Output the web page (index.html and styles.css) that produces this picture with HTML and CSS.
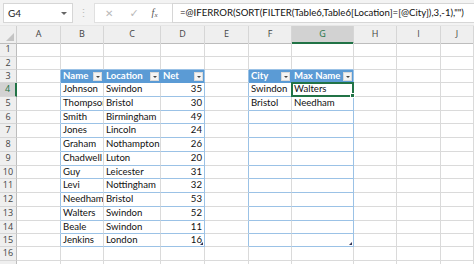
FILE: index.html
```html
<!DOCTYPE html>
<html>
<head>
<meta charset="utf-8">
<link rel="stylesheet" href="styles.css">
</head>
<body>
<div class="bar">
  <div class="namebox"><span>G4</span><span class="caret"></span></div>
  <div class="sep">⋮</div>
  <div class="btns"><span class="x">✕</span><span class="ok">✓</span><span class="fx">f<sub>x</sub></span></div>
  <div class="formula">=@IFERROR(SORT(FILTER(Table6,Table6[Location]=[@City]),3,-1),"")</div>
</div>
<div class="sheet">
  <div class="row hdr">
    <div class="corner"><span class="tri"></span></div>
    <div class="ch">A</div><div class="ch">B</div><div class="ch">C</div><div class="ch">D</div><div class="ch">E</div><div class="ch">F</div><div class="ch csel">G</div><div class="ch">H</div><div class="ch">I</div><div class="ch">J</div>
  </div>
  <div class="row h14">
    <div class="rh">1</div><div class="c"></div><div class="c"></div><div class="c"></div><div class="c"></div><div class="c"></div><div class="c"></div><div class="c"></div><div class="c"></div><div class="c"></div><div class="c"></div>
  </div>
  <div class="row h13">
    <div class="rh">2</div><div class="c"></div><div class="c tb"></div><div class="c tb"></div><div class="c tb"></div><div class="c"></div><div class="c tb"></div><div class="c tb"></div><div class="c"></div><div class="c"></div><div class="c"></div>
  </div>
  <div class="row h13">
    <div class="rh">3</div><div class="c tl"></div>
    <div class="c th"><span>Name</span><i class="dd"></i></div>
    <div class="c th"><span>Location</span><i class="dd"></i></div>
    <div class="c th tr"><span>Net</span><i class="dd"></i></div>
    <div class="c tl"></div>
    <div class="c th"><span>City</span><i class="dd"></i></div>
    <div class="c th tr"><span>Max Name</span><i class="dd"></i></div>
    <div class="c"></div><div class="c"></div><div class="c"></div>
  </div>
  <div class="row h14">
    <div class="rh rsel">4</div><div class="c tl"></div>
    <div class="c tb">Johnson</div><div class="c tb">Swindon</div><div class="c tb tr num">35</div>
    <div class="c tl"></div>
    <div class="c tb">Swindon</div><div class="c tb tr sc">Walters<i class="sel"><i class="fill"></i></i></div>
    <div class="c"></div><div class="c"></div><div class="c"></div>
  </div>
  <div class="row h14">
    <div class="rh">5</div><div class="c tl"></div>
    <div class="c tb">Thompson</div><div class="c tb">Bristol</div><div class="c tb tr num">30</div>
    <div class="c tl"></div>
    <div class="c tb">Bristol</div><div class="c tb tr">Needham</div>
    <div class="c"></div><div class="c"></div><div class="c"></div>
  </div>
  <div class="row h13">
    <div class="rh">6</div><div class="c tl"></div>
    <div class="c tb">Smith</div><div class="c tb">Birmingham</div><div class="c tb tr num">49</div>
    <div class="c tl"></div>
    <div class="c tb"></div><div class="c tb tr"></div>
    <div class="c"></div><div class="c"></div><div class="c"></div>
  </div>
  <div class="row h14">
    <div class="rh">7</div><div class="c tl"></div>
    <div class="c tb">Jones</div><div class="c tb">Lincoln</div><div class="c tb tr num">24</div>
    <div class="c tl"></div>
    <div class="c tb"></div><div class="c tb tr"></div>
    <div class="c"></div><div class="c"></div><div class="c"></div>
  </div>
  <div class="row h14">
    <div class="rh">8</div><div class="c tl"></div>
    <div class="c tb">Graham</div><div class="c tb">Nothampton</div><div class="c tb tr num">26</div>
    <div class="c tl"></div>
    <div class="c tb"></div><div class="c tb tr"></div>
    <div class="c"></div><div class="c"></div><div class="c"></div>
  </div>
  <div class="row h14">
    <div class="rh">9</div><div class="c tl"></div>
    <div class="c tb">Chadwell</div><div class="c tb">Luton</div><div class="c tb tr num">20</div>
    <div class="c tl"></div>
    <div class="c tb"></div><div class="c tb tr"></div>
    <div class="c"></div><div class="c"></div><div class="c"></div>
  </div>
  <div class="row h13">
    <div class="rh">10</div><div class="c tl"></div>
    <div class="c tb">Guy</div><div class="c tb">Leicester</div><div class="c tb tr num">31</div>
    <div class="c tl"></div>
    <div class="c tb"></div><div class="c tb tr"></div>
    <div class="c"></div><div class="c"></div><div class="c"></div>
  </div>
  <div class="row h14">
    <div class="rh">11</div><div class="c tl"></div>
    <div class="c tb">Levi</div><div class="c tb">Nottingham</div><div class="c tb tr num">32</div>
    <div class="c tl"></div>
    <div class="c tb"></div><div class="c tb tr"></div>
    <div class="c"></div><div class="c"></div><div class="c"></div>
  </div>
  <div class="row h14">
    <div class="rh">12</div><div class="c tl"></div>
    <div class="c tb">Needham</div><div class="c tb">Bristol</div><div class="c tb tr num">53</div>
    <div class="c tl"></div>
    <div class="c tb"></div><div class="c tb tr"></div>
    <div class="c"></div><div class="c"></div><div class="c"></div>
  </div>
  <div class="row h14">
    <div class="rh">13</div><div class="c tl"></div>
    <div class="c tb">Walters</div><div class="c tb">Swindon</div><div class="c tb tr num">52</div>
    <div class="c tl"></div>
    <div class="c tb"></div><div class="c tb tr"></div>
    <div class="c"></div><div class="c"></div><div class="c"></div>
  </div>
  <div class="row h13">
    <div class="rh">14</div><div class="c tl"></div>
    <div class="c tb">Beale</div><div class="c tb">Swindon</div><div class="c tb tr num">11</div>
    <div class="c tl"></div>
    <div class="c tb"></div><div class="c tb tr"></div>
    <div class="c"></div><div class="c"></div><div class="c"></div>
  </div>
  <div class="row h13">
    <div class="rh">15</div><div class="c tl"></div>
    <div class="c tb">Jenkins</div><div class="c tb">London</div><div class="c tb tr num end">16</div>
    <div class="c tl"></div>
    <div class="c tb"></div><div class="c tb tr end"></div>
    <div class="c"></div><div class="c"></div><div class="c"></div>
  </div>
  <div class="row h14">
    <div class="rh">16</div><div class="c"></div><div class="c"></div><div class="c"></div><div class="c"></div><div class="c"></div><div class="c"></div><div class="c"></div><div class="c"></div><div class="c"></div><div class="c"></div>
  </div>
  <div class="row h14">
    <div class="rh"></div><div class="c"></div><div class="c"></div><div class="c"></div><div class="c"></div><div class="c"></div><div class="c"></div><div class="c"></div><div class="c"></div><div class="c"></div><div class="c"></div>
  </div>
</div>
</body>
</html>
```

FILE: styles.css
```css
* { box-sizing: border-box; margin: 0; padding: 0; }
body {
  margin: 0;
  width: 474px;
  height: 264px;
  overflow: hidden;
  background: #fff;
  font-family: Lato, "Liberation Sans", sans-serif;
  color: #000;
}
.bar {
  height: 26px;
  background: #f3f3f3;
  display: flex;
  align-items: flex-start;
  padding-top: 3px;
  padding-left: 3px;
  border-bottom: 1px solid #e6e6e6;
}
.namebox {
  width: 70px;
  height: 20px;
  background: #fff;
  border: 1px solid #d6d6d6;
  display: flex;
  align-items: center;
  justify-content: space-between;
  padding: 0 5px 0 4px;
  font-size: 10px;
  color: #222;
}
.caret {
  width: 0; height: 0;
  border-left: 3px solid transparent;
  border-right: 3px solid transparent;
  border-top: 3px solid #666;
}
.sep {
  width: 21px;
  text-align: center;
  color: #bdbdbd;
  font-size: 11px;
  line-height: 20px;
}
.btns {
  width: 78px;
  height: 20px;
  background: #fff;
  border: 1px solid #e0e0e0;
  border-right: none;
  display: flex;
  align-items: center;
  font-family: "DejaVu Sans", sans-serif;
}
.btns .x { margin-left: 10px; color: #b9b9b9; font-size: 10px; }
.btns .ok { margin-left: 16px; color: #b9b9b9; font-size: 11px; }
.btns .fx { margin-left: 13px; color: #555; font-size: 10px; font-style: italic; font-family: "Liberation Serif", serif; }
.btns .fx sub { font-size: 7px; vertical-align: -1px; }
.formula {
  flex: 1;
  height: 20px;
  background: #fff;
  border: 1px solid #d6d6d6;
  border-right: none;
  padding-left: 7px;
  font-size: 9.6px;
  line-height: 18px;
  color: #111;
  white-space: nowrap;
  overflow: hidden;
}
.sheet { display: flex; flex-direction: column; }
.row {
  display: grid;
  grid-template-columns: 17px 44px 43px 57px 44px 44px 43px 62px 43px 44px 33px;
}
.hdr { height: 17px; background: #efefef; }
.h13 { height: 13px; }
.h14 { height: 14px; }
.corner {
  position: relative;
  border-right: 1px solid #d0d0d0;
  border-bottom: 1px solid #bdbdbd;
}
.tri {
  position: absolute;
  right: 2px; bottom: 2px;
  width: 0; height: 0;
  border-left: 8px solid transparent;
  border-bottom: 8px solid #c4c4c4;
}
.ch {
  border-right: 1px solid #d6d6d6;
  border-bottom: 1px solid #bdbdbd;
  text-align: center;
  font-family: "Open Sans", sans-serif;
  font-size: 9px;
  line-height: 16px;
  color: #444;
}
.csel {
  background: #d2d2d2;
  border-bottom: 2px solid #217346;
  color: #217346;
}
.rh {
  background: #efefef;
  border-right: 1px solid #bdbdbd;
  border-bottom: 1px solid #d6d6d6;
  font-family: "Open Sans", sans-serif;
  font-size: 9px;
  color: #444;
  text-align: center;
  line-height: 12px;
}
.rsel {
  background: #d2d2d2;
  border-right: 2px solid #217346;
  color: #217346;
}
.c {
  position: relative;
  border-right: 1px solid #dadada;
  border-bottom: 1px solid #dadada;
  font-size: 9.6px;
  line-height: 12px;
  padding: 0 2px;
  white-space: nowrap;
  overflow: hidden;
  color: #111;
}
.c.sc { overflow: visible; }
.tb { border-bottom-color: #9bc2e6; }
.tl { border-right-color: #9bc2e6; }
.tr { border-right-color: #9bc2e6; }
.num { text-align: right; }
.th {
  background: #5b9bd5;
  border-bottom-color: #5b9bd5;
  border-right-color: #5b9bd5;
  color: #fff;
  font-weight: bold;
  display: flex;
  align-items: center;
  justify-content: space-between;
  padding-right: 1px;
}
.th.tr { border-right-color: #9bc2e6; }
.dd {
  flex: none;
  position: relative;
  width: 9px;
  height: 9px;
  background: #f4f4f4;
  border: 1px solid #d9d9d9;
}
.dd::after {
  content: "";
  position: absolute;
  left: 2px; top: 3px;
  border-left: 2px solid transparent;
  border-right: 2px solid transparent;
  border-top: 2px solid #444;
}
.sel {
  position: absolute;
  left: -1px; top: -1px; right: -1px; bottom: -1px;
  border: 2px solid #217346;
  z-index: 2;
}
.fill {
  position: absolute;
  right: -3px; bottom: -3px;
  width: 5px; height: 5px;
  background: #217346;
  border: 1px solid #fff;
}
.end::after {
  content: "";
  position: absolute;
  right: 1px; bottom: 1px;
  border-left: 3px solid transparent;
  border-bottom: 3px solid #335;
}
```
